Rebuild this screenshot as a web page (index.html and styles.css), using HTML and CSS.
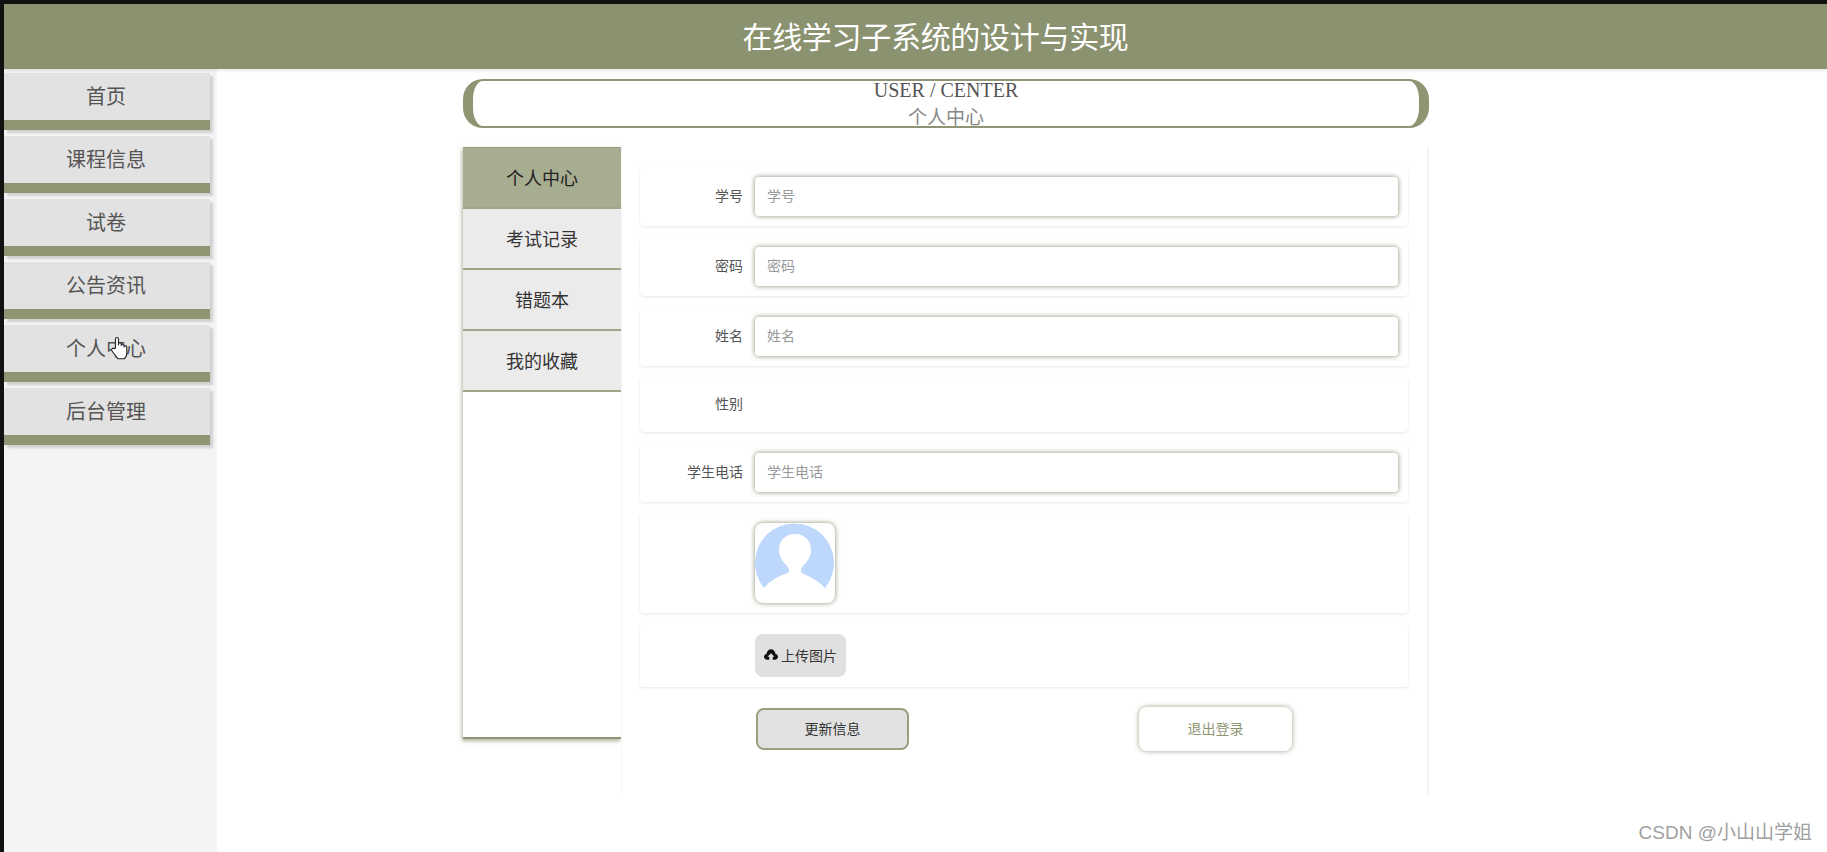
FILE: index.html
```html
<!DOCTYPE html>
<html lang="zh-CN">
<head>
    <meta charset="UTF-8">
    <meta name="viewport" content="width=device-width, initial-scale=1.0">
    <title>在线学习子系统的设计与实现</title>
    <link rel="stylesheet" href="styles.css">
</head>
<body>
    <div class="screen">
        <header class="top-bar">
            <h1>在线学习子系统的设计与实现</h1>
        </header>
        <div class="page">
            <nav class="side-nav">
                <a class="side-item">首页</a>
                <a class="side-item">课程信息</a>
                <a class="side-item">试卷</a>
                <a class="side-item">公告资讯</a>
                <a class="side-item">个人中心</a>
                <a class="side-item">后台管理</a>
            </nav>
            <main class="content">
                <div class="banner">
                    <div class="banner-en">USER / CENTER</div>
                    <div class="banner-cn">个人中心</div>
                </div>
                <div class="center-panel">
                    <div class="tabs">
                        <a class="tab active">个人中心</a>
                        <a class="tab">考试记录</a>
                        <a class="tab">错题本</a>
                        <a class="tab">我的收藏</a>
                    </div>
                    <form class="profile-form">
                        <div class="form-row">
                            <label>学号</label>
                            <input type="text" placeholder="学号">
                        </div>
                        <div class="form-row">
                            <label>密码</label>
                            <input type="text" placeholder="密码">
                        </div>
                        <div class="form-row">
                            <label>姓名</label>
                            <input type="text" placeholder="姓名">
                        </div>
                        <div class="form-row row-gender">
                            <label>性别</label>
                        </div>
                        <div class="form-row">
                            <label>学生电话</label>
                            <input type="text" placeholder="学生电话">
                        </div>
                        <div class="form-row row-avatar">
                            <label></label>
                            <div class="avatar">
                                <svg viewBox="0 0 80 80" width="80" height="80">
                                    <path fill="#bdd7fd" d="M9 65A39.500 39.500 0 1 1 70 65C66 60 58 55 47 50 45 49 46 45 48 43 53 38 56 33 56 27 56 17 49 11 40 11 31 11 24 17 24 27 24 33 27 38 32 43 34 45 35 49 33 50 22 53 14 59 9 65Z"/>
                                </svg>
                            </div>
                        </div>
                        <div class="form-row row-upload">
                            <label></label>
                            <button type="button" class="upload-btn">
                                <svg viewBox="0 0 16 12" width="14" height="11">
                                    <path fill="#111" d="M4 12H3.500C1.500 12 0 10.500 0 8.700 0 7 1.200 5.700 2.800 5.400 3.300 2.300 5.500 0 8 0s4.700 2.300 5.200 5.400C14.800 5.700 16 7 16 8.700 16 10.500 14.500 12 12.500 12H10V8.500h2L8 4.500l-4 4h2V12z"/>
                                </svg>
                                上传图片
                            </button>
                        </div>
                        <div class="form-actions">
                            <button type="button" class="btn-update">更新信息</button>
                            <button type="button" class="btn-logout">退出登录</button>
                        </div>
                    </form>
                </div>
            </main>
        </div>
        <svg class="hand-cursor" viewBox="0 0 18 24" width="19" height="24">
            <path fill="#fff" stroke="#222" stroke-width="1.1" stroke-linejoin="round" d="M5 12V3.200C5 1 8 1 8 3.200V9l0-1c0-1.800 2.800-1.800 2.800 0v1.500c0-1.600 2.700-1.600 2.700 0v1.500c0-1.500 2.800-1.500 2.800 0.300v5.500c0 3-1.800 5.500-2.500 6H7.500C6 21 2.800 17 1.500 15c-1.200-2 0.800-3.800 2.300-2.300z"/>
        </svg>
        <div class="watermark">CSDN @小山山学姐</div>
    </div>
</body>
</html>
```

FILE: styles.css
```css
* {
    box-sizing: border-box;
}

html, body {
    margin: 0;
    height: 100%;
    overflow: hidden;
}

body {
    font-family: "Liberation Sans", "Noto Sans CJK SC", sans-serif;
    background-color: #fff;
}

.screen {
    position: relative;
    height: 852px;
    border-top: 4px solid #111;
    border-left: 4px solid #111;
    display: flex;
    flex-direction: column;
}

.top-bar {
    height: 65px;
    padding: 0 0 4px 40px;
    background-color: #8b9270;
    display: flex;
    justify-content: center;
    align-items: center;
    box-shadow: 0 1px 4px rgba(0, 0, 0, 0.12);
    z-index: 1;
}

.top-bar h1 {
    margin: 0;
    font-size: 30px;
    font-weight: 400;
    letter-spacing: -0.3px;
    color: #fff;
}

.page {
    flex: 1;
    display: flex;
    min-height: 0;
}

.side-nav {
    width: 213px;
    flex-shrink: 0;
    padding-top: 4px;
    background-color: #f4f4f4;
    display: flex;
    flex-direction: column;
    gap: 6px;
}

.side-item {
    width: 206px;
    height: 57px;
    padding: 0 2px 3px 0;
    font-size: 20px;
    color: #555;
    background-color: #e2e2e2;
    border-bottom: 10px solid #8f9572;
    box-shadow: 3px 3px 2px #d0d0d0;
    display: flex;
    justify-content: center;
    align-items: center;
}

.content {
    width: 966px;
    margin-left: 246px;
    padding-top: 10px;
}

.banner {
    height: 49px;
    text-align: center;
    font-family: "Liberation Serif", "Noto Sans CJK SC", serif;
    overflow: hidden;
    background-color: #fff;
    border-style: solid;
    border-color: #8f9572;
    border-width: 2px 10px;
    border-radius: 20px;
}

.banner-en {
    font-size: 20px;
    line-height: 18px;
    color: #555;
}

.banner-cn {
    font-size: 19px;
    line-height: 37px;
    color: #888;
}

.center-panel {
    margin-top: 19px;
    display: flex;
    align-items: flex-start;
}

.tabs {
    width: 158px;
    height: 592px;
    flex-shrink: 0;
    background-color: #fff;
    border-top: 1px solid #999d85;
    border-bottom: 2px solid #8f9572;
    box-shadow: -1px 2px 4px rgba(120, 125, 90, 0.6);
}

.tab {
    height: 61px;
    padding-bottom: 2px;
    font-size: 18px;
    color: #333;
    background-color: #ebebeb;
    border-bottom: 2px solid #a0a58a;
    display: flex;
    justify-content: center;
    align-items: center;
}

.tab.active {
    color: #222;
    background-color: #a7ad90;
}

.profile-form {
    width: 808px;
    height: 648px;
    padding: 20px 19px 0 18px;
    background-color: #fff;
    border-left: 1px solid #f6f6f6;
    border-right: 2px solid #f4f4f4;
    display: flex;
    flex-direction: column;
    gap: 11px;
}

.form-row {
    height: 59px;
    padding-right: 10px;
    border-radius: 4px;
    background-color: #fff;
    box-shadow: 0 1px 3px rgba(0, 0, 0, 0.1);
    display: flex;
    align-items: center;
    flex-shrink: 0;
}

.form-row label {
    width: 103px;
    margin-right: 12px;
    padding-bottom: 3px;
    flex-shrink: 0;
    text-align: right;
    font-size: 14px;
    color: #555;
}

.form-row input {
    flex: 1;
    height: 39px;
    padding: 0 12px 2px;
    font-family: inherit;
    font-size: 14px;
    color: #333;
    background-color: #fff;
    border: none;
    border-radius: 4px;
    outline: none;
    box-shadow: 0 0 4px 1px rgba(120, 120, 95, 0.6);
}

.form-row input::placeholder {
    color: #999;
}

.row-gender {
    height: 55px;
}

.row-avatar {
    height: 100px;
}

.row-upload {
    height: 63px;
}

.avatar {
    width: 80px;
    height: 80px;
    border-radius: 8px;
    overflow: hidden;
    box-shadow: 0 0 4px 1px rgba(120, 120, 95, 0.6);
}

.avatar svg {
    display: block;
}

.upload-btn {
    width: 91px;
    height: 43px;
    padding: 0 0 2px;
    font-family: inherit;
    font-size: 14px;
    color: #333;
    background-color: #e0e0e0;
    border: none;
    border-radius: 8px;
    display: flex;
    justify-content: center;
    align-items: center;
    gap: 3px;
}

.form-actions {
    margin-top: 9px;
    padding-left: 116px;
    display: flex;
    align-items: center;
}

.form-actions button {
    padding: 0 0 3px;
    font-family: inherit;
    font-size: 14px;
    border-radius: 8px;
}

.btn-update {
    width: 153px;
    height: 42px;
    color: #333;
    background-color: #e2e2e2;
    border: 2px solid #9a9f82;
}

.btn-logout {
    width: 153px;
    height: 44px;
    margin-left: 230px;
    color: #8f9572;
    background-color: #fff;
    border: none;
    box-shadow: 0 0 4px 1px rgba(120, 120, 95, 0.5);
}

.hand-cursor {
    position: absolute;
    left: 106px;
    top: 332px;
}

.watermark {
    position: absolute;
    right: 15px;
    bottom: 8px;
    font-size: 19px;
    color: #a0a0a0;
}
```
